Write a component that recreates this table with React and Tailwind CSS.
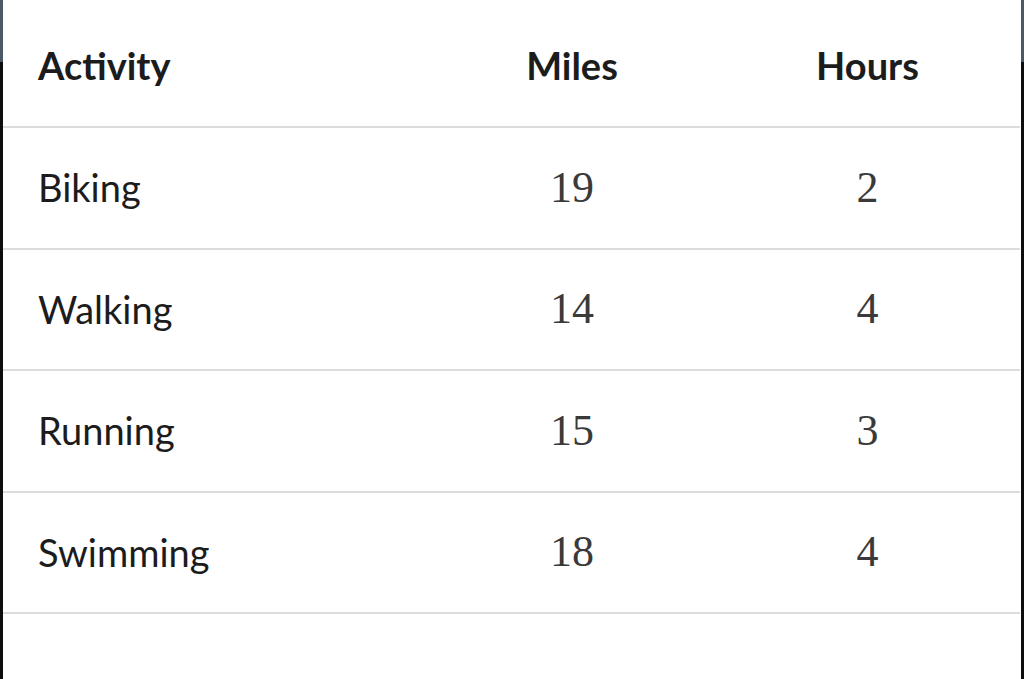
const rows = [
  { activity: "Biking", miles: 19, hours: 2 },
  { activity: "Walking", miles: 14, hours: 4 },
  { activity: "Running", miles: 15, hours: 3 },
  { activity: "Swimming", miles: 18, hours: 4 },
]

// 左右兩側的深色邊條：上段偏灰藍，下段純黑
function EdgeStrip() {
  return (
    <div className="flex w-[3px] shrink-0 flex-col">
      <div className="h-[62px] bg-[#4b5966]" />
      <div className="flex-1 bg-[#0d0d0d]" />
    </div>
  )
}

const grid = "grid grid-cols-[422px_294px_297px]"

export default function App() {
  return (
    <div
      className="flex h-[679px] w-[1024px] overflow-hidden bg-white"
      style={{ fontFamily: "Lato, 'Noto Sans', sans-serif" }}
    >
      <EdgeStrip />
      <div className="flex flex-1 flex-col">
        <div className={`${grid} h-[128px] items-center border-b-2 border-[#dcdcdc] pt-[4px] text-[38px] font-bold text-[#1c1c1c]`}>
          <div className="pl-[35px]">Activity</div>
          <div className="text-center">Miles</div>
          <div className="text-center">Hours</div>
        </div>
        {rows.map((row) => (
          <div
            key={row.activity}
            className={`${grid} h-[121.5px] items-center border-b-2 border-[#dcdcdc]`}
          >
            <div className="pl-[35px] text-[38px] text-[#1c1c1c]">{row.activity}</div>
            <div className="text-center font-['Liberation_Serif',serif] text-[44px] text-[#3a3a3a]">
              {row.miles}
            </div>
            <div className="text-center font-['Liberation_Serif',serif] text-[44px] text-[#3a3a3a]">
              {row.hours}
            </div>
          </div>
        ))}
      </div>
      <div className="w-px shrink-0 bg-white" />
      <EdgeStrip />
    </div>
  )
}
